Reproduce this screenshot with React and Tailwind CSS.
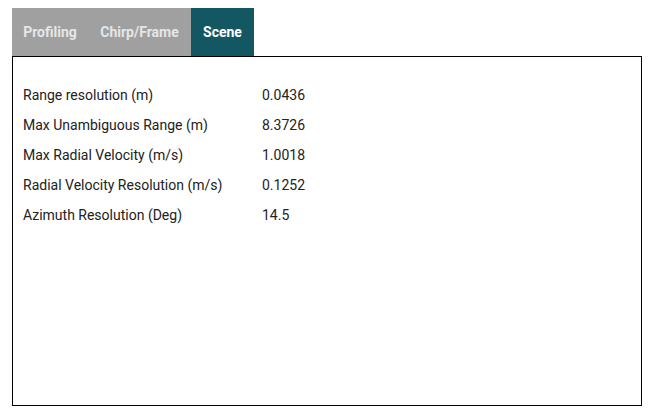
import React, { useState } from "react";

const tabs = [
  { name: "Profiling", width: "w-[76px]" },
  { name: "Chirp/Frame", width: "w-[103px]" },
  { name: "Scene", width: "w-[63px]" },
];

const rows = [
  ["Range resolution (m)", "0.0436"],
  ["Max Unambiguous Range (m)", "8.3726"],
  ["Max Radial Velocity (m/s)", "1.0018"],
  ["Radial Velocity Resolution (m/s)", "0.1252"],
  ["Azimuth Resolution (Deg)", "14.5"],
];

const App = () => {
  const [active, setActive] = useState("Scene");

  return (
    <div className="w-[651px] h-[411px] bg-white pt-2 px-3 font-['Roboto',sans-serif]">
      {/* tab bar */}
      <div className="flex h-12">
        {tabs.map((tab) => (
          <button
            key={tab.name}
            onClick={() => setActive(tab.name)}
            className={
              tab.width +
              " h-12 text-sm font-bold text-center " +
              (active === tab.name
                ? "bg-[#135763] text-white"
                : "bg-[#a0a0a0] text-[#e6e6e6]")
            }
          >
            {tab.name}
          </button>
        ))}
      </div>

      {/* scene panel */}
      <div className="w-[630px] h-[350px] border border-black pt-[23px] px-[10px]">
        {rows.map(([label, value]) => (
          <div key={label} className="flex h-[30px] items-center text-sm text-[#222]">
            <p className="w-[239px]">{label}</p>
            <p>{value}</p>
          </div>
        ))}
      </div>
    </div>
  );
};

export default App;
